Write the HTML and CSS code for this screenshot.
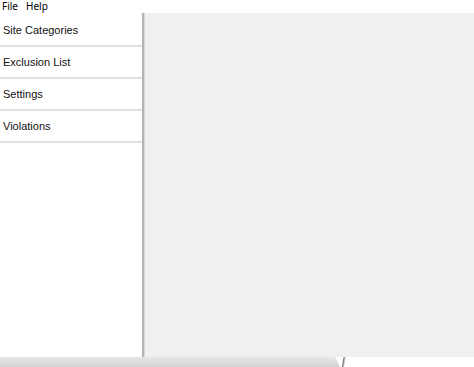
FILE: index.html
```html
<!DOCTYPE html>
<html>
<head>
<meta charset="utf-8">
<link rel="stylesheet" href="styles.css">
</head>
<body>
<div class="window">
  <div class="menubar">
    <span class="menu-item">File</span>
    <span class="menu-item">Help</span>
  </div>
  <div class="main">
    <div class="sidebar">
      <div class="nav-btn">Site Categories</div>
      <div class="nav-btn">Exclusion List</div>
      <div class="nav-btn">Settings</div>
      <div class="nav-btn">Violations</div>
    </div>
    <div class="content"></div>
  </div>
  <div class="taskbar">
    <div class="taskbar-left"></div>
    <div class="taskbar-right"></div>
  </div>
</div>
</body>
</html>
```
FILE: styles.css
```css
html, body {
  margin: 0;
  padding: 0;
  background: #ffffff;
}
.window {
  width: 474px;
  height: 367px;
  overflow: hidden;
  display: flex;
  flex-direction: column;
}
.menubar {
  height: 13px;
  display: flex;
  gap: 8px;
  padding-left: 2px;
  font-family: "Noto Sans", "Open Sans", sans-serif;
  font-size: 10px;
  line-height: 13px;
  color: #000;
  background: #fff;
}
.main {
  height: 344px;
  display: flex;
}
.sidebar {
  width: 142px;
  background: #fff;
  border-right: 2px solid #b4b4b4;
  box-shadow: 1px 0 0 #dadada;
  padding-top: 2px;
  flex-shrink: 0;
}
.nav-btn {
  height: 30px;
  border-bottom: 2px solid #e0e0e0;
  padding-left: 3px;
  font-family: "Liberation Sans", Arial, sans-serif;
  font-size: 11px;
  line-height: 31px;
  color: #111;
}
.content {
  flex: 1;
  background: #f0f0f0;
  margin-left: 1px;
}
.taskbar {
  height: 10px;
  display: flex;
}
.taskbar-left {
  width: 340px;
  background: linear-gradient(180deg, #e6e6e6 0%, #d2d2d2 100%);
  clip-path: polygon(0 0, 335px 0, 340px 100%, 0 100%);
}
.taskbar-right {
  flex: 1;
  background: linear-gradient(100deg, #ffffff 0, #ffffff 3px, #777 4px, #fff 6px, #fff 100%);
}
```
